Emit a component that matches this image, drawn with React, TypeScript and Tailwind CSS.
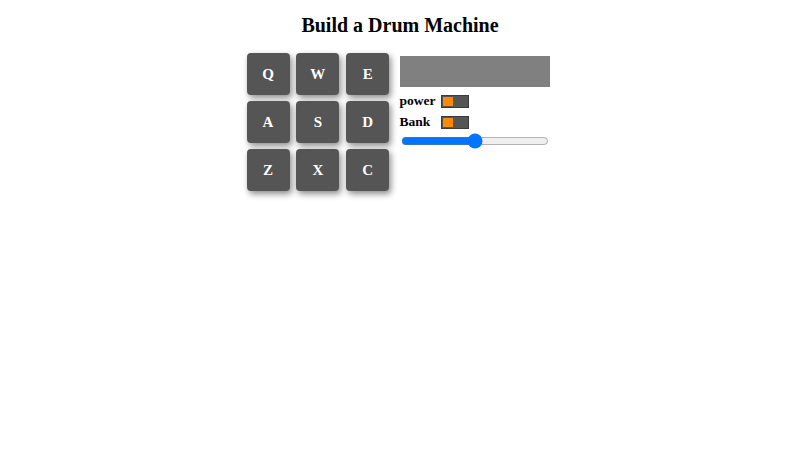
import React, { useState } from 'react';

const keys = ['Q', 'W', 'E', 'A', 'S', 'D', 'Z', 'X', 'C'];

function Toggle() {
  return (
    <div className="w-[28px] h-[13px] bg-[#555555] border border-[#3a3a3a] p-px flex">
      <div className="w-[10px] h-[9px] bg-[#ff8a00]" />
    </div>
  );
}

export default function App() {
  const [volume, setVolume] = useState(50);

  return (
    <div className="w-[800px] h-[450px] bg-white text-black font-['Liberation_Serif',serif]">
      <h1 className="text-center text-[20px] font-bold pt-[12px] leading-[26px]">
        Build a Drum Machine
      </h1>

      <div className="flex justify-center mt-[15px] gap-[10px] pr-[4px]">
        {/* Pads */}
        <div className="grid grid-cols-3 gap-x-[6.5px] gap-y-[6px] w-[143px]">
          {keys.map((k) => (
            <button
              key={k}
              className="w-[43px] h-[42px] bg-[#555555] rounded-[4px] text-white font-bold text-[15px] flex items-center justify-center shadow-[2px_3px_6px_rgba(0,0,0,0.45)]"
            >
              {k}
            </button>
          ))}
        </div>

        {/* Controls */}
        <div className="w-[150px] pt-[3px]">
          <div className="h-[31px] bg-[#808080]" />
          <div className="flex items-center gap-[7px] mt-[7px] h-[14px]">
            <span className="font-bold text-[13.5px] w-[34px]">power</span>
            <Toggle />
          </div>
          <div className="flex items-center gap-[7px] mt-[7px] h-[14px]">
            <span className="font-bold text-[13.5px] w-[34px]">Bank</span>
            <Toggle />
          </div>
          <input
            type="range"
            min={0}
            max={100}
            value={volume}
            onChange={(e) => setVolume(Number(e.target.value))}
            className="w-[148px] mt-[4px] ml-px block"
          />
        </div>
      </div>
    </div>
  );
}
